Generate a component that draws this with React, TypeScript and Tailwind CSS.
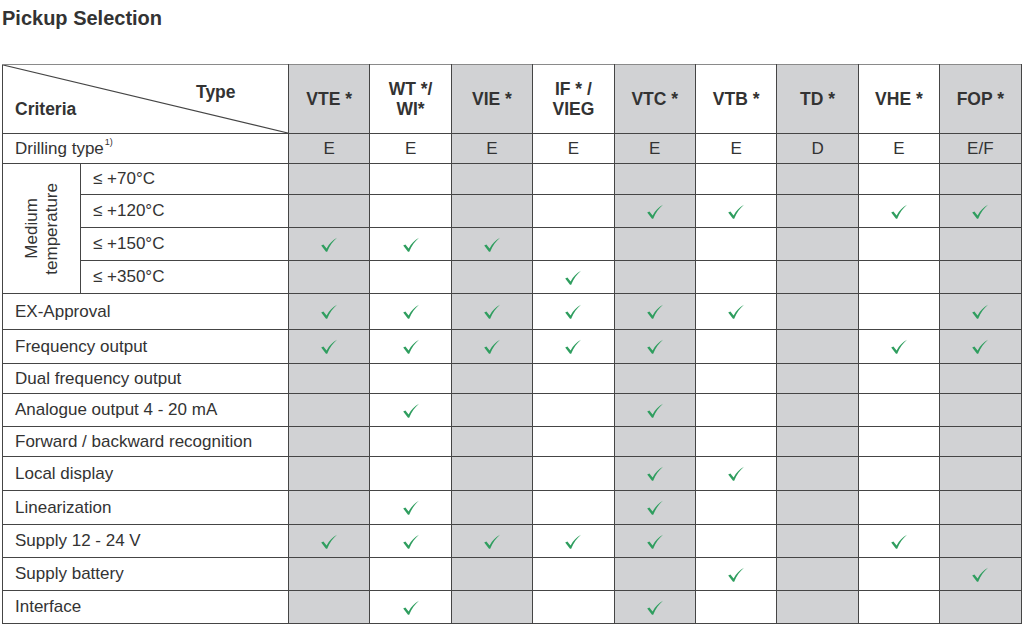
import React from "react";

const FONT = "font-['Liberation_Sans',Arial,sans-serif]";

const TYPES = ["VTE *", "WT */\nWI*", "VIE *", "IF * /\nVIEG", "VTC *", "VTB *", "TD *", "VHE *", "FOP *"];
const DRILLING = ["E", "E", "E", "E", "E", "E", "D", "E", "E/F"];

const TEMPS: { label: string; checks: number[]; h: string }[] = [
  { label: "≤ +70°C", checks: [], h: "h-[31px]" },
  { label: "≤ +120°C", checks: [4, 5, 7, 8], h: "h-[33px]" },
  { label: "≤ +150°C", checks: [0, 1, 2], h: "h-[33px]" },
  { label: "≤ +350°C", checks: [3], h: "h-[33px]" },
];

const ROWS: { label: string; checks: number[]; h: string }[] = [
  { label: "EX-Approval", checks: [0, 1, 2, 3, 4, 5, 8], h: "h-[36px]" },
  { label: "Frequency output", checks: [0, 1, 2, 3, 4, 7, 8], h: "h-[34px]" },
  { label: "Dual frequency output", checks: [], h: "h-[30px]" },
  { label: "Analogue output 4 - 20 mA", checks: [1, 4], h: "h-[33px]" },
  { label: "Forward / backward recognition", checks: [], h: "h-[30px]" },
  { label: "Local display", checks: [4, 5], h: "h-[34px]" },
  { label: "Linearization", checks: [1, 4], h: "h-[34px]" },
  { label: "Supply 12 - 24 V", checks: [0, 1, 2, 3, 4, 7], h: "h-[33px]" },
  { label: "Supply battery", checks: [5, 8], h: "h-[33px]" },
  { label: "Interface", checks: [1, 4], h: "h-[33px]" },
];

const border = "border border-[#454545]";

function Check() {
  return (
    <svg width="18" height="16" viewBox="0 0 18 16" className="inline-block">
      <path d="M1.2 8.6 L3.4 7.6 L6.6 11.4 C9.2 6.8 12.6 3.2 17 0.8 C13.2 4 9.8 8.4 7.2 14.8 L6 14.8 Z" fill="#2f9e5f" />
    </svg>
  );
}

function DataCells({ checks }: { checks: number[] }) {
  return (
    <>
      {TYPES.map((_, i) => (
        <td key={i} className={`${border} text-center align-middle ${i % 2 === 0 ? "bg-[#d1d2d4]" : "bg-white"}`}>
          {checks.includes(i) && <Check />}
        </td>
      ))}
    </>
  );
}

export default function App() {
  return (
    <div className={`w-[1024px] h-[624px] bg-white overflow-hidden text-[#333] ${FONT}`}>
      <h1 className="pl-[2px] pt-[6px] text-[20px] font-bold leading-[24px] text-[#333]">Pickup Selection</h1>
      <table className="mt-[34px] ml-[2px] w-[1019px] table-fixed border-collapse text-[17px]">
        <colgroup>
          <col className="w-[78px]" />
          <col className="w-[208px]" />
          {TYPES.map((_, i) => (
            <col key={i} className="w-[81.4px]" />
          ))}
        </colgroup>
        <tbody>
          <tr className="h-[68px]">
            <td colSpan={2} className={`${border} border-t-[#8a8a8a] relative p-0`}>
              <svg className="absolute inset-0 w-full h-full" preserveAspectRatio="none" viewBox="0 0 100 100">
                <line x1="0" y1="0" x2="100" y2="100" stroke="#454545" strokeWidth="1.2" vectorEffect="non-scaling-stroke" />
              </svg>
              <div className="relative h-[68px] text-[17.5px] font-bold">
                <span className="absolute left-[193px] top-[14px]">Type</span>
                <span className="absolute left-[12px] top-[31px]">Criteria</span>
              </div>
            </td>
            {TYPES.map((t, i) => (
              <td
                key={i}
                className={`${border} border-t-[#8a8a8a] text-center align-middle text-[17.5px] font-bold leading-[20px] whitespace-pre-line ${i % 2 === 0 ? "bg-[#d1d2d4]" : "bg-white"}`}
              >
                {t}
              </td>
            ))}
          </tr>
          <tr className="h-[30px]">
            <td colSpan={2} className={`${border} pl-[12px] align-middle`}>
              Drilling type<sup className="text-[9px] ml-[1px] align-[4px]">1)</sup>
            </td>
            {DRILLING.map((d, i) => (
              <td key={i} className={`${border} text-center align-middle ${i % 2 === 0 ? "bg-[#d1d2d4]" : "bg-white"}`}>
                {d}
              </td>
            ))}
          </tr>
          {TEMPS.map((r, ri) => (
            <tr key={r.label} className={r.h}>
              {ri === 0 && (
                <td rowSpan={4} className={`${border} text-center align-middle p-0`}>
                  <div className="flex justify-center">
                    <span className="[writing-mode:vertical-rl] rotate-180 leading-[20px] text-[17px] text-center">
                      Medium
                      <br />
                      temperature
                    </span>
                  </div>
                </td>
              )}
              <td className={`${border} pl-[12px] align-middle`}>{r.label}</td>
              <DataCells checks={r.checks} />
            </tr>
          ))}
          {ROWS.map((r) => (
            <tr key={r.label} className={r.h}>
              <td colSpan={2} className={`${border} pl-[12px] align-middle`}>
                {r.label}
              </td>
              <DataCells checks={r.checks} />
            </tr>
          ))}
        </tbody>
      </table>
    </div>
  );
}
